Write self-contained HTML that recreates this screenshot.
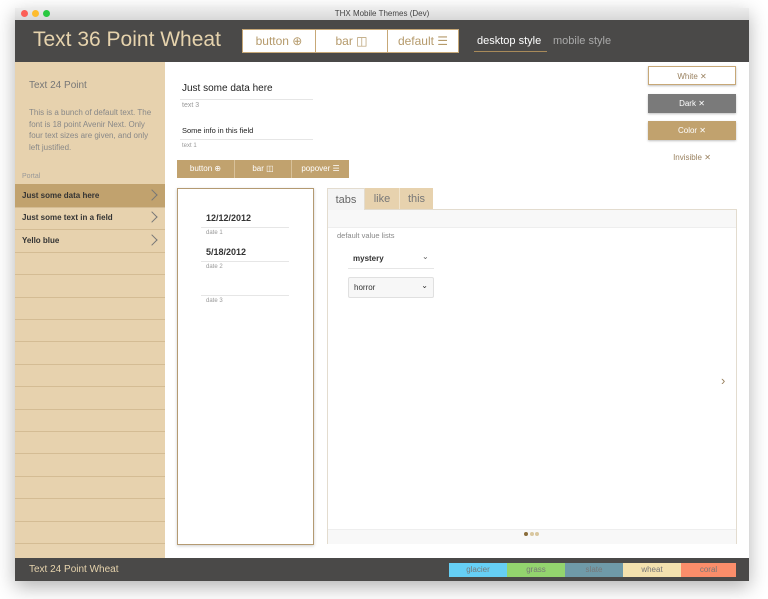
<!DOCTYPE html><html><head><style>
*{margin:0;padding:0;box-sizing:border-box}
body{width:768px;height:599px;background:#fff;font-family:"Liberation Sans",sans-serif;position:relative;overflow:hidden}
.a{position:absolute}
.win{left:15px;top:8px;width:734px;height:573px;box-shadow:0 6px 18px rgba(0,0,0,.3);background:#fff}
.tb{left:15px;top:8px;width:734px;height:12px;background:linear-gradient(#ececec,#d8d8d8);font-size:8px;color:#444;text-align:center;line-height:12px}
.dot{width:7px;height:7px;border-radius:50%;top:10px}
.hdr{left:15px;top:20px;width:734px;height:42px;background:#4a4948}
.side{left:15px;top:62px;width:150px;height:496px;background:#e7d2ae}
.row{left:15px;width:150px;height:1px;background:#d4bc94}
.ri{left:15px;width:150px;height:22px;font-size:8px;font-weight:bold;color:#333;line-height:22px;padding-left:7px}
.chev{position:absolute;right:9px;top:6px;width:8px;height:8px;border-right:1px solid #777;border-top:1px solid #777;transform:rotate(45deg)}
.seg{border:1px solid #c7a877;background:#fff;color:#b59a6b;font-size:12px;text-align:center;line-height:22px}
.btn{width:88px;height:19px;font-size:8px;text-align:center;line-height:19px;box-shadow:0 1px 2px rgba(0,0,0,.25)}
.ws{background:#c1a26e;color:#fff;font-size:8px;text-align:center;line-height:18px;border-right:1px solid #d8c19a}
.sw{top:563px;height:14px;width:58px;font-size:8px;color:#777;text-align:center;line-height:14px}
.ul{height:1px;background:#e6e6e6}
.lbl{font-size:6px;color:#999}
</style></head><body>
<div class="a win"></div>
<div class="a tb">THX Mobile Themes (Dev)</div>
<div class="a dot" style="left:21px;background:#fc5f57"></div>
<div class="a dot" style="left:32px;background:#fdbc2e"></div>
<div class="a dot" style="left:43px;background:#29c840"></div>
<div class="a hdr"></div>
<div class="a" style="left:33px;top:28px;font-size:21px;color:#e6d3ad">Text 36 Point Wheat</div>
<div class="a seg" style="left:242px;top:29px;width:74px;height:24px">button ⊕</div>
<div class="a seg" style="left:315px;top:29px;width:73px;height:24px">bar ◫</div>
<div class="a seg" style="left:387px;top:29px;width:72px;height:24px">default ☰</div>
<div class="a" style="left:477px;top:35px;font-size:11px;color:#fff">desktop style</div>
<div class="a" style="left:474px;top:51px;width:73px;height:1px;background:#a88a5a"></div>
<div class="a" style="left:553px;top:35px;font-size:11px;color:#aaa">mobile style</div>
<div class="a side"></div>
<div class="a" style="left:29px;top:80px;font-size:10px;color:#777">Text 24 Point</div>
<div class="a" style="left:29px;top:107px;width:128px;font-size:8px;line-height:11.5px;color:#888">This is a bunch of default text. The font is 18 point Avenir Next. Only four text sizes are given, and only left justified.</div>
<div class="a" style="left:22px;top:173px;font-size:7px;color:#999">Portal</div>
<div class="a" style="left:15px;top:184px;width:150px;height:23px;background:#c1a26e"></div>
<div class="a ri" style="top:185px">Just some data here<span class="chev"></span></div>
<div class="a ri" style="top:207px">Just some text in a field<span class="chev"></span></div>
<div class="a ri" style="top:230px">Yello blue<span class="chev"></span></div>
<div class="a row" style="top:207px"></div><div class="a row" style="top:229px"></div><div class="a row" style="top:252px"></div><div class="a row" style="top:274px"></div><div class="a row" style="top:297px"></div><div class="a row" style="top:319px"></div><div class="a row" style="top:341px"></div><div class="a row" style="top:364px"></div><div class="a row" style="top:386px"></div><div class="a row" style="top:409px"></div><div class="a row" style="top:431px"></div><div class="a row" style="top:453px"></div><div class="a row" style="top:476px"></div><div class="a row" style="top:498px"></div><div class="a row" style="top:521px"></div><div class="a row" style="top:543px"></div>
<div class="a" style="left:182px;top:83px;font-size:10px;color:#222">Just some data here</div>
<div class="a ul" style="left:180px;top:99px;width:133px"></div>
<div class="a lbl" style="left:182px;top:102px;font-size:7px">text 3</div>
<div class="a" style="left:182px;top:126px;font-size:7.5px;color:#222">Some info in this field</div>
<div class="a ul" style="left:180px;top:139px;width:133px"></div>
<div class="a lbl" style="left:182px;top:143px">text 1</div>
<div class="a ws" style="left:177px;top:160px;width:58px;height:18px">button ⊕</div>
<div class="a ws" style="left:235px;top:160px;width:57px;height:18px">bar ◫</div>
<div class="a ws" style="left:292px;top:160px;width:57px;height:18px;border:none">popover ☰</div>
<div class="a btn" style="left:648px;top:66px;background:#fff;border:1px solid #c7a877;color:#9a8260">White ✕</div>
<div class="a btn" style="left:648px;top:94px;background:#7a7a7a;color:#fff">Dark ✕</div>
<div class="a btn" style="left:648px;top:121px;background:#c1a26e;color:#fff">Color ✕</div>
<div class="a" style="left:648px;top:153px;width:88px;text-align:center;font-size:8px;color:#9a8260">Invisible ✕</div>
<div class="a" style="left:177px;top:188px;width:137px;height:357px;border:1.5px solid #b49a72;box-shadow:0 1px 3px rgba(0,0,0,.2)"></div>
<div class="a" style="left:206px;top:213px;font-size:9px;font-weight:bold;color:#333">12/12/2012</div>
<div class="a ul" style="left:201px;top:227px;width:88px"></div>
<div class="a lbl" style="left:206px;top:230px">date 1</div>
<div class="a" style="left:206px;top:247px;font-size:9px;font-weight:bold;color:#333">5/18/2012</div>
<div class="a ul" style="left:201px;top:261px;width:88px"></div>
<div class="a lbl" style="left:206px;top:264px">date 2</div>
<div class="a ul" style="left:201px;top:295px;width:88px"></div>
<div class="a lbl" style="left:206px;top:298px">date 3</div>
<div class="a" style="left:327px;top:209px;width:410px;height:335px;border:1px solid #e3dccf"></div>
<div class="a" style="left:327px;top:188px;width:38px;height:22px;background:#f4f4f4;border:1px solid #e3dccf;border-bottom:none;font-size:11px;color:#666;text-align:center;line-height:22px">tabs</div>
<div class="a" style="left:365px;top:188px;width:34px;height:21px;background:#e7d2ae;font-size:11px;color:#777;text-align:center;line-height:22px">like</div>
<div class="a" style="left:399px;top:188px;width:34px;height:21px;background:#e7d2ae;font-size:11px;color:#777;text-align:center;line-height:22px;border-left:1px solid #f1e4cc">this</div>
<div class="a" style="left:328px;top:210px;width:408px;height:18px;background:#f8f8f8;border-bottom:1px solid #eee"></div>
<div class="a" style="left:337px;top:231px;font-size:7.5px;color:#888">default value lists</div>
<div class="a" style="left:353px;top:254px;font-size:8px;font-weight:bold;color:#333">mystery</div>
<div class="a" style="left:422px;top:252px;font-size:8px;color:#666">⌄</div>
<div class="a ul" style="left:348px;top:268px;width:86px"></div>
<div class="a" style="left:348px;top:277px;width:86px;height:21px;background:#f7f7f7;border:1px solid #e0e0e0;border-radius:2px;font-size:8px;color:#333;padding-left:5px;line-height:20px">horror<span style="position:absolute;right:5px;top:-2px">⌄</span></div>
<div class="a" style="left:721px;top:373px;font-size:13px;color:#9a8260">›</div>
<div class="a" style="left:328px;top:529px;width:408px;height:15px;background:#f8f8f8;border-top:1px solid #eee"></div>
<div class="a" style="left:524px;top:532px;width:4px;height:4px;border-radius:50%;background:#8a6d3b"></div>
<div class="a" style="left:530px;top:532px;width:4px;height:4px;border-radius:50%;background:#d9c79f"></div>
<div class="a" style="left:535px;top:532px;width:4px;height:4px;border-radius:50%;background:#d9c79f"></div>
<div class="a" style="left:15px;top:558px;width:734px;height:23px;background:#4a4948"></div>
<div class="a" style="left:29px;top:564px;font-size:10px;color:#e6d3ad">Text 24 Point Wheat</div>
<div class="a sw" style="left:449px;background:#66cff5">glacier</div>
<div class="a sw" style="left:507px;background:#93d46e">grass</div>
<div class="a sw" style="left:565px;background:#6f9aa8">slate</div>
<div class="a sw" style="left:623px;background:#f3e1ae">wheat</div>
<div class="a sw" style="left:681px;width:55px;background:#fa8d6a">coral</div>
</body></html>
